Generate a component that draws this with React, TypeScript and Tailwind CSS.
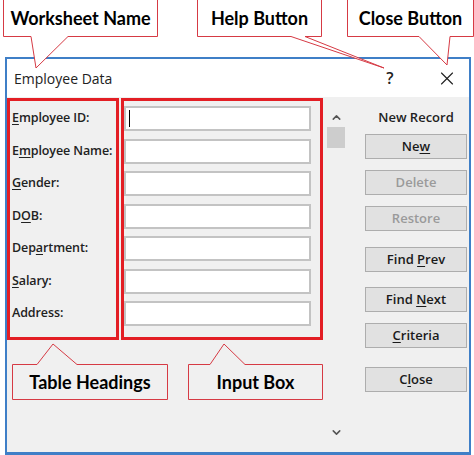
import { ChevronUp, ChevronDown, X } from "lucide-react"

const labels: { pre: string; key: string; post: string }[] = [
  { pre: "", key: "E", post: "mployee ID:" },
  { pre: "E", key: "m", post: "ployee Name:" },
  { pre: "", key: "G", post: "ender:" },
  { pre: "D", key: "O", post: "B:" },
  { pre: "Dep", key: "a", post: "rtment:" },
  { pre: "", key: "S", post: "alary:" },
  { pre: "Address:", key: "", post: "" },
]

function FormButton({
  pre,
  k,
  post,
  disabled,
  className,
}: {
  pre: string
  k?: string
  post?: string
  disabled?: boolean
  className?: string
}) {
  return (
    <div
      className={`flex h-[25px] w-[102px] items-center justify-center border border-[#adadad] bg-[#e1e1e1] text-[13px] font-semibold ${
        disabled ? "text-[#9a9a9a]" : "text-[#1a1a1a]"
      } ${className ?? ""}`}
    >
      <span className="whitespace-pre">
        {pre}
        {k && <span className="underline underline-offset-2">{k}</span>}
        {post}
      </span>
    </div>
  )
}

function Callouts() {
  // annotation shapes drawn over the screenshot
  const stroke = "#d63a44"
  return (
    <svg className="pointer-events-none absolute inset-0" width={474} height={455}>
      <path d="M3.5,-2 H157.5 V36.5 H68 L36,68 L31,36.5 H3.5 Z" fill="white" stroke={stroke} strokeWidth={1} />
      <path d="M197.5,-2 H321.5 V36.5 H305 L384,68 L291,36.5 H197.5 Z" fill="white" stroke={stroke} strokeWidth={1} />
      <path d="M347.5,-2 H473.5 V36.5 H450 L447,65 L419,36.5 H347.5 Z" fill="white" stroke={stroke} strokeWidth={1} />
      <path d="M12.5,364.5 H37 L53,344 L77,364.5 H167.5 V399.5 H12.5 Z" fill="none" stroke={stroke} strokeWidth={1} />
      <path d="M188.5,364.5 H210 L224,344 L245,364.5 H322.5 V399.5 H188.5 Z" fill="none" stroke={stroke} strokeWidth={1} />
    </svg>
  )
}

function CalloutText({ text, className }: { text: string; className: string }) {
  return (
    <div
      className={`absolute flex items-center justify-center font-['Lato'] text-[18px] font-bold text-black ${className}`}
    >
      {text}
    </div>
  )
}

export default function App() {
  return (
    <div className="relative h-[455px] w-[474px] overflow-hidden bg-white font-['Open_Sans',sans-serif]">
      <div className="ml-[5px] pt-[57px]">
        <div className="flex h-[398px] w-[466px] flex-col border-x-2 border-t-2 border-b-[3px] border-[#3f7fc7]">
          {/* Title bar */}
          <div className="flex h-[38px] items-center bg-white">
            <span className="pl-[7px] text-[14px] text-[#222]">Employee Data</span>
            <span className="ml-auto w-[20px] text-center text-[16px] font-semibold text-[#222]">?</span>
            <span className="ml-[36px] mr-[11px] flex w-[22px] justify-center text-[#222]">
              <X size={23} strokeWidth={1.25} />
            </span>
          </div>

          {/* Body */}
          <div className="flex flex-1 items-start bg-[#f0f0f0]">
            {/* Labels */}
            <div className="mt-[1px] flex h-[242px] w-[112px] flex-col gap-[7.5px] border-[3px] border-[#e31e24] pl-[2px] pt-[5px]">
              {labels.map((l) => (
                <div key={l.pre + l.post} className="flex h-[25px] items-center whitespace-nowrap text-[12.5px] font-semibold tracking-[-0.1px] text-[#222]">
                  <span>
                    {l.pre}
                    {l.key && <span className="underline underline-offset-2">{l.key}</span>}
                    {l.post}
                  </span>
                </div>
              ))}
            </div>

            {/* Inputs */}
            <div className="ml-[2px] mt-[1px] flex h-[242px] w-[202px] flex-col gap-[7.5px] border-[3px] border-[#e31e24] pt-[5px]">
              {labels.map((l, i) => (
                <div key={i} className="flex h-[25px] w-[187px] items-center border-2 border-[#c3c3c3] bg-white pl-[3px]">
                  {i === 0 && <div className="h-[17px] w-px bg-black" />}
                </div>
              ))}
            </div>

            {/* Scrollbar */}
            <div className="ml-[4px] flex h-[355px] w-[18px] flex-col items-center">
              <ChevronUp size={13} strokeWidth={2.8} className="mt-[14px] text-[#555]" />
              <div className="mt-[3px] h-[21px] w-[18px] bg-[#cdcdcd]" />
              <ChevronDown size={13} strokeWidth={2.8} className="mb-[13px] mt-auto text-[#555]" />
            </div>

            {/* Buttons */}
            <div className="flex flex-1 flex-col pl-[20px] pt-[12px]">
              <div className="h-[16px] w-[102px] text-center text-[13px] font-semibold leading-[16px] text-[#222]">
                New Record
              </div>
              <FormButton pre="Ne" k="w" className="mt-[9px]" />
              <FormButton pre="Delete" disabled className="mt-[11px]" />
              <FormButton pre="Restore" disabled className="mt-[11px]" />
              <FormButton pre="Find " k="P" post="rev" className="mt-[16px]" />
              <FormButton pre="Find " k="N" post="ext" className="mt-[15px]" />
              <FormButton pre="" k="C" post="riteria" className="mt-[11px]" />
              <FormButton pre="C" k="l" post="ose" className="mt-[19px]" />
            </div>
          </div>
        </div>
      </div>

      <Callouts />
      <CalloutText text="Worksheet Name" className="left-[3px] top-0 h-[36px] w-[155px]" />
      <CalloutText text="Help Button" className="left-[197px] top-0 h-[36px] w-[125px]" />
      <CalloutText text="Close Button" className="left-[347px] top-0 h-[36px] w-[127px]" />
      <CalloutText text="Table Headings" className="left-[12px] top-[364px] h-[36px] w-[156px]" />
      <CalloutText text="Input Box" className="left-[188px] top-[364px] h-[36px] w-[135px]" />
    </div>
  )
}
